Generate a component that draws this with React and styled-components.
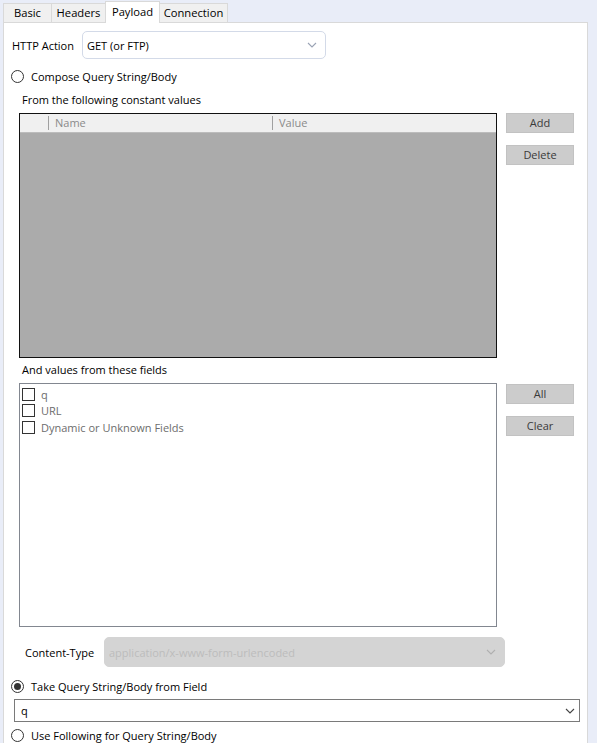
import React from "react";
import styled, { createGlobalStyle } from "styled-components";

const GlobalStyle = createGlobalStyle`
  html, body {
    margin: 0;
    padding: 0;
    background: #e9edf8;
  }
  body {
    font-family: "Open Sans", "Noto Sans", sans-serif;
    font-size: 11px;
    color: #000;
  }
`;

const Page = styled.div`
  width: 597px;
  height: 743px;
  overflow: hidden;
`;

const TabBar = styled.div`
  display: flex;
  align-items: flex-end;
  height: 22px;
  padding-left: 4px;
`;

const Tab = styled.div`
  box-sizing: border-box;
  height: ${(p) => (p.active ? "22px" : "19px")};
  width: ${(p) => p.w}px;
  padding-top: ${(p) => (p.active ? "2px" : "1px")};
  text-align: center;
  background: ${(p) => (p.active ? "#fff" : "#f0f0f0")};
  border: 1px solid #d9d9d9;
  border-bottom: none;
  margin-left: -1px;
  position: relative;
  z-index: ${(p) => (p.active ? 2 : 1)};
  margin-bottom: ${(p) => (p.active ? "-1px" : "0")};
  font-size: 11.2px;
  line-height: 16px;
`;

const Panel = styled.div`
  box-sizing: border-box;
  margin-left: 3px;
  width: 585px;
  height: 730px;
  background: #fff;
  border: 1px solid #d9d9d9;
  border-bottom: none;
  padding: 8px 0 0 8px;
  display: flex;
  flex-direction: column;
`;

const Row = styled.div`
  display: flex;
  align-items: center;
`;

const Label = styled.span`
  font-size: 11px;
  white-space: nowrap;
`;

const ActionLabel = styled(Label)`
  width: 70px;
`;

const RoundSelect = styled.div`
  box-sizing: border-box;
  display: flex;
  align-items: center;
  justify-content: space-between;
  width: ${(p) => p.w}px;
  height: ${(p) => p.h}px;
  padding: 0 8px 0 4px;
  border-radius: 5px;
  border: 1px solid ${(p) => (p.disabled ? "#d4d4d4" : "#d3dae8")};
  background: ${(p) => (p.disabled ? "#d4d4d4" : "#fff")};
  color: ${(p) => (p.disabled ? "#bcbcbc" : "#000")};
  font-size: 11px;
`;

const RadioRow = styled.label`
  display: flex;
  align-items: center;
  gap: 7px;
  height: 16px;
  margin-left: -1px;
  margin-top: ${(p) => p.mt || 0}px;
  font-size: 11px;
`;

const RadioDot = styled.span`
  box-sizing: border-box;
  width: 13px;
  height: 13px;
  border-radius: 50%;
  border: 1px solid #333;
  display: flex;
  align-items: center;
  justify-content: center;
  &::after {
    content: "";
    width: 7px;
    height: 7px;
    border-radius: 50%;
    background: ${(p) => (p.checked ? "#333" : "transparent")};
  }
`;

const Section = styled.div`
  display: flex;
  gap: 9px;
  margin-left: 7px;
`;

const SectionMain = styled.div`
  display: flex;
  flex-direction: column;
  width: 478px;
`;

const SectionTitle = styled.div`
  height: 16px;
  line-height: 16px;
  padding-left: 3px;
  margin: ${(p) => p.mt}px 0 5px;
  font-size: 11px;
`;

const Grid = styled.div`
  box-sizing: border-box;
  height: 245px;
  border: 1px solid #111;
  background: #ababab;
  display: flex;
  flex-direction: column;
`;

const GridHead = styled.div`
  display: flex;
  height: 18px;
  background: #f0f0f0;
  border-bottom: 1px solid #bcbcbc;
  color: #8a8a8a;
  font-size: 11px;
  line-height: 18px;
`;

const HeadCell = styled.div`
  box-sizing: border-box;
  width: ${(p) => (p.w ? `${p.w}px` : "auto")};
  flex: ${(p) => (p.w ? "none" : 1)};
  padding-left: 6px;
  border-left: ${(p) => (p.first ? "none" : "1px solid #a0a0a0")};
  margin: 2px 0;
  line-height: 14px;
`;

const ListBox = styled.div`
  box-sizing: border-box;
  height: 244px;
  border: 1px solid #828790;
  padding: 2px 0 0 2px;
`;

const ListItem = styled.div`
  display: flex;
  align-items: center;
  gap: 6px;
  height: 16.5px;
  color: #6d6d6d;
  font-size: 11px;
`;

const Box = styled.span`
  box-sizing: border-box;
  width: 13px;
  height: 13px;
  border: 1px solid #333;
  background: #fff;
`;

const ButtonCol = styled.div`
  display: flex;
  flex-direction: column;
  gap: 12px;
  padding-top: ${(p) => p.pt}px;
`;

const Button = styled.div`
  box-sizing: border-box;
  width: 68px;
  height: 20px;
  background: #cccccc;
  border: 1px solid #c2c2c2;
  color: #3a3a3a;
  font-size: 11px;
  line-height: 18px;
  text-align: center;
`;

const ContentRow = styled(Row)`
  margin: 10px 0 0 0;
`;

const ContentLabel = styled(Label)`
  box-sizing: border-box;
  width: 92px;
  padding-left: 13px;
`;

const FieldSelect = styled.div`
  box-sizing: border-box;
  display: flex;
  align-items: center;
  justify-content: space-between;
  width: 566px;
  height: 23px;
  margin: 5px 0 0 2px;
  padding: 0 4px 0 6px;
  border: 1px solid #7a7a7a;
  font-size: 11px;
`;

const Chevron = ({ color = "#555", size = 10 }) => (
  <svg width={size} height={size * 0.6} viewBox="0 0 10 6">
    <polyline points="1,1 5,5 9,1" fill="none" stroke={color} strokeWidth="1.1" />
  </svg>
);

const tabs = [
  { name: "Basic", w: 49 },
  { name: "Headers", w: 55 },
  { name: "Payload", w: 55, active: true },
  { name: "Connection", w: 69 },
];

const fields = ["q", "URL", "Dynamic or Unknown Fields"];

export default function App() {
  return (
    <Page>
      <GlobalStyle />
      <TabBar>
        {tabs.map((t) => (
          <Tab key={t.name} w={t.w} active={t.active}>
            {t.name}
          </Tab>
        ))}
      </TabBar>
      <Panel>
        <Row>
          <ActionLabel>HTTP Action</ActionLabel>
          <RoundSelect w={244} h={28}>
            <span>GET (or FTP)</span>
            <Chevron color="#9aa3b5" />
          </RoundSelect>
        </Row>
        <RadioRow mt={9}>
          <RadioDot />
          Compose Query String/Body
        </RadioRow>
        <Section>
          <SectionMain>
            <SectionTitle mt={8}>From the following constant values</SectionTitle>
            <Grid>
              <GridHead>
                <HeadCell w={28} first />
                <HeadCell w={224}>Name</HeadCell>
                <HeadCell>Value</HeadCell>
              </GridHead>
            </Grid>
          </SectionMain>
          <ButtonCol pt={29}>
            <Button>Add</Button>
            <Button>Delete</Button>
          </ButtonCol>
        </Section>
        <Section>
          <SectionMain>
            <SectionTitle mt={4}>And values from these fields</SectionTitle>
            <ListBox>
              {fields.map((f) => (
                <ListItem key={f}>
                  <Box />
                  {f}
                </ListItem>
              ))}
            </ListBox>
          </SectionMain>
          <ButtonCol pt={26}>
            <Button>All</Button>
            <Button>Clear</Button>
          </ButtonCol>
        </Section>
        <ContentRow>
          <ContentLabel>Content-Type</ContentLabel>
          <RoundSelect w={401} h={30} disabled>
            <span>application/x-www-form-urlencoded</span>
            <Chevron color="#b0b0b0" />
          </RoundSelect>
        </ContentRow>
        <RadioRow mt={11}>
          <RadioDot checked />
          Take Query String/Body from Field
        </RadioRow>
        <FieldSelect>
          <span>q</span>
          <Chevron color="#444" />
        </FieldSelect>
        <RadioRow mt={5}>
          <RadioDot />
          Use Following for Query String/Body
        </RadioRow>
      </Panel>
    </Page>
  );
}
